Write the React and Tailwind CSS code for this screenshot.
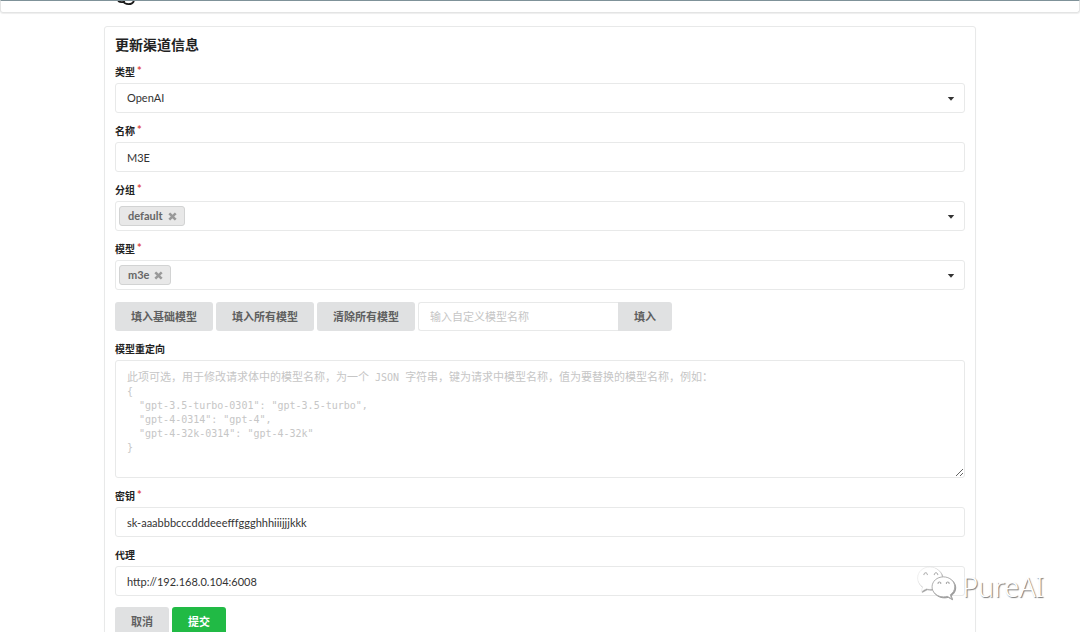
import { useState } from 'react'

const FIELD = 'w-full h-[30px] rounded-[3px] border border-[#e8e9e9] bg-white px-[11px] text-[11px] text-[#333] outline-none'
const BUTTON = 'h-[29px] rounded-[3px] bg-[#e0e1e2] px-4 pt-[2px] text-[11px] font-bold text-[#5f5f60]'

function Caret() {
  return (
    <svg viewBox="0 0 8 4" className="pointer-events-none absolute right-[10px] top-[14px] h-1 w-2" fill="#333">
      <path d="M0.8 0h6.4L4 3.8z" />
    </svg>
  )
}

function Label({ htmlFor, required, children }) {
  return (
    <label htmlFor={htmlFor} className="mb-[3px] flex h-[15px] text-[10px] font-bold leading-[15px] text-[#222]">
      {children}
      {required && <span className="ml-[2px] text-[11px] leading-[12px] text-[#e04848]">*</span>}
    </label>
  )
}

function TextField({ id, label, required, value, onChange }) {
  return (
    <div className="mb-[11px]">
      <Label htmlFor={id} required={required}>{label}</Label>
      <input id={id} type="text" className={FIELD} value={value} onChange={e => onChange(e.target.value)} />
    </div>
  )
}

function TagField({ id, label, tags, onRemove }) {
  return (
    <div className="mb-[11px]">
      <Label htmlFor={id} required>{label}</Label>
      <div className="relative">
        <div className="flex h-[30px] items-center gap-1 rounded-[3px] border border-[#e8e9e9] bg-white pl-[3px] pr-8">
          {tags.map(tag => (
            <span key={tag} className="flex h-[20px] items-center gap-[5px] rounded-[3px] border border-[#d2d3d3] bg-[#e8e8e8] pl-2 pr-[7px] text-[11px] font-bold text-[#666]">
              {tag}
              <button type="button" aria-label={`删除 ${tag}`} onClick={() => onRemove(tag)}>
                <svg viewBox="0 0 10 10" className="h-[9px] w-[9px]" stroke="#999" strokeWidth="2.8" strokeLinecap="square">
                  <path d="M2.4 2.4l5.2 5.2M7.6 2.4L2.4 7.6" />
                </svg>
              </button>
            </span>
          ))}
          <input id={id} type="text" className="min-w-0 flex-1 text-[11px] outline-none" />
        </div>
        <Caret />
      </div>
    </div>
  )
}

function Mono({ children }) {
  return <span className="whitespace-pre font-['DejaVu_Sans_Mono','Noto_Sans_CJK_SC',monospace] text-[10px]">{children}</span>
}

const EXAMPLE = [
  '{',
  '  "gpt-3.5-turbo-0301": "gpt-3.5-turbo",',
  '  "gpt-4-0314": "gpt-4",',
  '  "gpt-4-32k-0314": "gpt-4-32k"',
  '}',
]

function MappingField({ value, onChange }) {
  return (
    <div className="mb-[11px]">
      <Label htmlFor="mapping">模型重定向</Label>
      <div className="relative">
        <textarea
          id="mapping"
          aria-describedby="mapping-hint"
          className="block h-[118px] w-full resize-y rounded-[3px] border border-[#e8e9e9] bg-white px-[11px] py-[9px] font-['DejaVu_Sans_Mono','Noto_Sans_CJK_SC',monospace] text-[10px] leading-[14px] text-[#333] outline-none"
          value={value}
          onChange={e => onChange(e.target.value)}
        />
        {/* the hint is only shown while the field is empty */}
        {!value && (
          <div id="mapping-hint" className="pointer-events-none absolute left-3 right-3 top-[10px] text-[11px] leading-[14px] text-[#c6c6c6]">
            <p className="h-[15px]">
              此项可选，用于修改请求体中的模型名称，为一个<Mono> JSON </Mono>字符串，键为请求中模型名称，值为要替换的模型名称，例如：
            </p>
            {EXAMPLE.map(line => (
              <p key={line} className="flex h-[14px]"><Mono>{line}</Mono></p>
            ))}
          </div>
        )}
      </div>
    </div>
  )
}

function Watermark() {
  return (
    <div className="pointer-events-none absolute bottom-6 right-9 flex items-start gap-[6px]">
      <svg viewBox="0 0 41 36" className="h-[34px] w-[39px] drop-shadow-[1px_1px_0px_#999]" fill="#fff" stroke="#ddd" strokeWidth="0.5">
        <path d="M13.5 1C6.300 1 0.500 6 0.500 12.800c0 4 2 7.200 5.300 9.400L4.300 27l5.400-2.800c1.300.3 2.600.5 3.900.5 7.200 0 13-5.300 13-11.900S20.700 1 13.500 1z" />
        <path d="M7.300 9.600a1.800 1.800 0 1 1 3.400 0M18.300 9.600a1.800 1.800 0 1 1 3.400 0" fill="none" stroke="#999" strokeWidth="1" />
        <path d="M27.800 11.500c-6.700 0-12 4.700-12 10.600s5.300 10.600 12 10.600c1.400 0 2.800-.2 4-.6l4.700 2.600-1.400-4.200c3-2 4.700-5 4.700-8.400 0-5.900-5.300-10.600-12-10.600z" stroke="#aaa" strokeWidth="1" />
        <path d="M22.200 19a1.500 1.500 0 1 1 2.800 0M31 19a1.500 1.500 0 1 1 2.800 0" fill="none" stroke="#999" strokeWidth="1" />
      </svg>
      <span className="font-['Noto_Sans',sans-serif] text-[27px] font-light leading-[42px] text-white [text-shadow:1px_1px_1px_#777]">PureAI</span>
    </div>
  )
}

export default function App() {
  const [type, setType] = useState('OpenAI')
  const [name, setName] = useState('M3E')
  const [groups, setGroups] = useState(['default'])
  const [models, setModels] = useState(['m3e'])
  const [custom, setCustom] = useState('')
  const [mapping, setMapping] = useState('')
  const [key, setKey] = useState('sk-aaabbbcccdddeeefffggghhhiiijjjkkk')
  const [proxy, setProxy] = useState('http://192.168.0.104:6008')

  return (
    <div className="relative h-screen overflow-hidden bg-white font-['Lato','Noto_Sans_CJK_SC',sans-serif]">
      <header className="h-[13px] rounded-b-[3px] border border-t-[#7f9299] border-[#e3e4e4] shadow-[0_1px_1px_#eee]">
        <div className="mx-auto max-w-[846px]">
          <svg viewBox="0 0 18 5" className="h-[5px] w-[18px]" fill="none" stroke="#1a1a1a" strokeWidth="1.8">
            <path d="M1 0C3 1.200 6 1.200 8 .4M6 0c1 2.200 3 3.200 5.500 3.200S16 2 17 0" />
          </svg>
        </div>
      </header>

      <main className="mx-auto mt-[13px] max-w-[872px] rounded-[3px] border border-[#e8e9e9] p-[10px] shadow-[0_1px_1px_#eee]">
        <h1 className="mb-3 h-4 text-[14px] font-bold leading-4 text-[#222]">更新渠道信息</h1>
        <form onSubmit={e => e.preventDefault()}>
          <div className="mb-[11px]">
            <Label htmlFor="type" required>类型</Label>
            <div className="relative">
              <select id="type" className={`${FIELD} appearance-none`} value={type} onChange={e => setType(e.target.value)}>
                <option>OpenAI</option>
              </select>
              <Caret />
            </div>
          </div>
          <TextField id="name" label="名称" required value={name} onChange={setName} />
          <TagField id="groups" label="分组" tags={groups} onRemove={t => setGroups(groups.filter(g => g !== t))} />
          <TagField id="models" label="模型" tags={models} onRemove={t => setModels(models.filter(m => m !== t))} />

          <div className="mb-[11px] flex gap-[3px] pt-px">
            <button type="button" className={BUTTON}>填入基础模型</button>
            <button type="button" className={BUTTON}>填入所有模型</button>
            <button type="button" className={BUTTON} onClick={() => setModels([])}>清除所有模型</button>
            <div className="flex">
              <input
                type="text"
                aria-label="输入自定义模型名称"
                placeholder="输入自定义模型名称"
                className="h-[29px] w-[200px] rounded-l-[3px] border border-r-0 border-[#e8e9e9] px-[11px] text-[11px] text-[#333] outline-none placeholder:text-[#c6c6c6]"
                value={custom}
                onChange={e => setCustom(e.target.value)}
              />
              <button type="button" className={`${BUTTON} rounded-l-none`}>填入</button>
            </div>
          </div>

          <MappingField value={mapping} onChange={setMapping} />
          <TextField id="key" label="密钥" required value={key} onChange={setKey} />
          <TextField id="proxy" label="代理" value={proxy} onChange={setProxy} />

          <div className="flex gap-[3px]">
            <button type="button" className={BUTTON}>取消</button>
            <button type="submit" className="h-[29px] rounded-[3px] bg-[#21ba45] px-4 pt-[2px] text-[11px] font-bold text-white">提交</button>
          </div>
        </form>
      </main>

      <Watermark />
    </div>
  )
}
